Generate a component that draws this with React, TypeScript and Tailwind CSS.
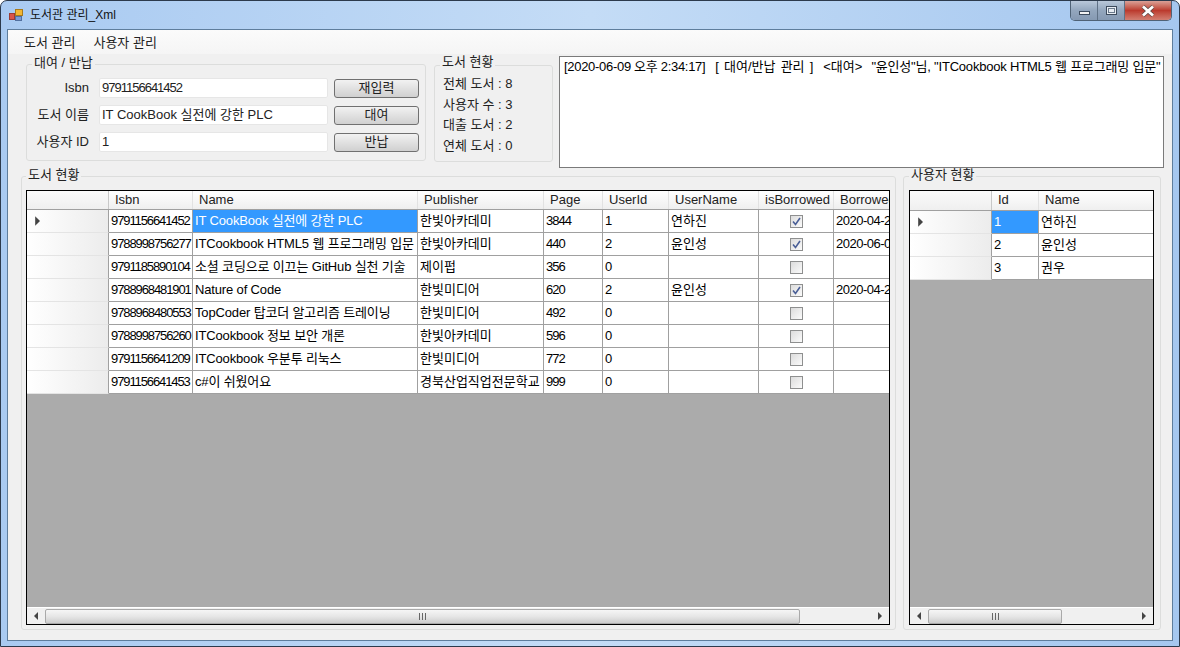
const font = "font-['Liberation_Sans','Noto_Sans_CJK_KR',sans-serif]";

const bookCols = [
  { title: "Isbn", w: 84, cell: "tracking-[-1.1px]" },
  { title: "Name", w: 225, cell: "tracking-[-0.15px]" },
  { title: "Publisher", w: 126 },
  { title: "Page", w: 59, cell: "tracking-[-1px]" },
  { title: "UserId", w: 66 },
  { title: "UserName", w: 90 },
  { title: "isBorrowed", w: 75, cell: "justify-center pl-0 pr-[2px]" },
  { title: "BorrowedDate", w: 120, cell: "tracking-[-0.5px]" },
];

const books = [
  ["9791156641452", "IT CookBook 실전에 강한 PLC", "한빛아카데미", "3844", "1", "연하진", true, "2020-04-21"],
  ["9788998756277", "ITCookbook HTML5 웹 프로그래밍 입문", "한빛아카데미", "440", "2", "윤인성", true, "2020-06-09"],
  ["9791185890104", "소셜 코딩으로 이끄는 GitHub 실천 기술", "제이펍", "356", "0", "", false, ""],
  ["9788968481901", "Nature of Code", "한빛미디어", "620", "2", "윤인성", true, "2020-04-21"],
  ["9788968480553", "TopCoder 탑코더 알고리즘 트레이닝", "한빛미디어", "492", "0", "", false, ""],
  ["9788998756260", "ITCookbook 정보 보안 개론", "한빛아카데미", "596", "0", "", false, ""],
  ["9791156641209", "ITCookbook 우분투 리눅스", "한빛미디어", "772", "0", "", false, ""],
  ["9791156641453", "c#이 쉬웠어요", "경북산업직업전문학교", "999", "0", "", false, ""],
];

const userCols = [
  { title: "Id", w: 47 },
  { title: "Name", w: 115 },
];

const users = [
  ["1", "연하진"],
  ["2", "윤인성"],
  ["3", "권우"],
];

type Col = { title: string; w: number; cell?: string };

function Arrow({ dir, big }: { dir: "left" | "right"; big?: boolean }) {
  return (
    <svg width={big ? 6 : 5} height={big ? 10 : 8} viewBox="0 0 5 8" className="shrink-0">
      <path d={dir === "left" ? "M4 0v8L0 4z" : "M1 0v8l4-4z"} fill="#444" />
    </svg>
  );
}

function Check({ on }: { on: boolean }) {
  return (
    <div className="flex h-[13px] w-[13px] items-center justify-center border border-[#8e8f8f] bg-gradient-to-br from-[#dcdcdc] to-[#fbfbfb]">
      {on && (
        <svg width="9" height="9" viewBox="0 0 9 9">
          <path d="M1 4.5 3.5 7.5 8 1" fill="none" stroke="#4a5f97" strokeWidth="1.6" />
        </svg>
      )}
    </div>
  );
}

function GridView({
  cols,
  rows,
  headH,
  thumbW,
  height,
  width,
}: {
  cols: Col[];
  rows: (string | boolean)[][];
  headH: number;
  thumbW: number;
  height: number;
  width: number;
}) {
  return (
    <div className="flex flex-col border border-black bg-[#ababab]" style={{ height, width }}>
      <div className="min-h-0 flex-1 overflow-hidden">
        <div className="flex border-b border-[#a0a0a0] bg-gradient-to-b from-white to-[#efefef]" style={{ height: headH }}>
          <div className="w-[82px] shrink-0 border-r border-[#c8c8c8] bg-gradient-to-b from-[#fafafa] to-[#efefef]" />
          {cols.map((c) => (
            <div
              key={c.title}
              className="shrink-0 overflow-hidden whitespace-nowrap border-r border-[#e2e2e2] pl-[6px] leading-[17px] text-[#222]"
              style={{ width: c.w }}
            >
              {c.title}
            </div>
          ))}
        </div>
        {rows.map((row, i) => (
          <div key={i} className="flex h-[23px]">
            <div className="flex w-[82px] shrink-0 items-center border-r border-b border-r-[#a0a0a0] border-b-[#e4e4e4] bg-gradient-to-r from-white to-[#ececec] pl-[7px]">
              {i === 0 && <Arrow dir="right" big />}
            </div>
            {cols.map((c, j) => {
              const v = row[j];
              const selected = i === 0 && j === (cols.length === 2 ? 0 : 1);
              return (
                <div
                  key={c.title}
                  className={`flex shrink-0 items-center overflow-hidden whitespace-nowrap border-r border-b border-[#a0a0a0] pl-[2px] ${
                    selected ? "bg-[#3399ff] text-white" : "bg-white text-black"
                  } ${c.cell ?? ""}`}
                  style={{ width: c.w }}
                >
                  {typeof v === "boolean" ? <Check on={v} /> : v}
                </div>
              );
            })}
          </div>
        ))}
      </div>
      <div className="flex h-[17px] shrink-0 items-center border-t border-white bg-[#f0f0f0]">
        <div className="flex h-full w-[18px] shrink-0 items-center pl-[7px]">
          <Arrow dir="left" />
        </div>
        <div
          className="flex h-[15px] shrink-0 items-center justify-center rounded-[2px] border border-[#a9a9a9] bg-gradient-to-b from-[#f6f6f6] via-[#e6e6e6] to-[#cdcdcd]"
          style={{ width: thumbW }}
        >
          <svg width="7" height="7" viewBox="0 0 7 7">
            <path d="M0.5 0v7M3.5 0v7M6.5 0v7" stroke="#666" />
          </svg>
        </div>
        <div className="flex flex-1 justify-end pr-[7px]">
          <Arrow dir="right" />
        </div>
      </div>
    </div>
  );
}

function GroupBox({
  title,
  className,
  legend,
  children,
}: {
  title: string;
  className: string;
  legend: string;
  children?: React.ReactNode;
}) {
  return (
    <div className={`shrink-0 rounded-[3px] border border-[#dcdddc] ${className}`}>
      <div className={`${legend} h-[14px] w-fit bg-[#f0f0f0] px-[2px] leading-[14px] text-[#222]`}>{title}</div>
      {children}
    </div>
  );
}

export default function App() {
  return (
    <div className={`${font} flex h-[647px] w-[1180px] flex-col overflow-hidden rounded-t-[7px] border border-[#2c3a4c] bg-gradient-to-r from-[#a9caf1] via-[#c4dcf6] to-[#a5c7ef] text-[13px] text-[#222]`}>
      {/* title bar */}
      <div className="flex h-[28px] shrink-0 items-start">
        <div className="flex h-[28px] flex-1 items-center pl-[8px]">
          <svg width="14" height="14" viewBox="0 0 14 14">
            <rect x="0.5" y="5.5" width="5" height="6" fill="#d9534a" stroke="#9c3a33" />
            <rect x="6.5" y="1.5" width="7" height="6" fill="#f2b632" stroke="#a87a1a" />
            <rect x="6.5" y="8.5" width="6" height="4" fill="#7a9ad6" stroke="#52709f" />
          </svg>
          <span className="ml-[7px] text-[12px] text-[#111]">도서관 관리_Xml</span>
        </div>
        {/* caption buttons */}
        <div className="mr-[7px] flex h-[20px] overflow-hidden rounded-b-[5px] border border-t-0 border-[#4f6276]">
          <div className="flex w-[27px] items-center justify-center border-r border-[#5f7186] bg-gradient-to-b from-[#b9c8da] via-[#93a6bd] to-[#8599b2]">
            <div className="mt-[5px] h-[4px] w-[11px] border border-[#3c4a5c] bg-[#f2f2f2]" />
          </div>
          <div className="flex w-[27px] items-center justify-center border-r border-[#5f7186] bg-gradient-to-b from-[#b9c8da] via-[#93a6bd] to-[#8599b2]">
            <div className="flex h-[9px] w-[11px] items-center justify-center border border-[#3c4a5c] bg-[#e8edf3]">
              <div className="h-[5px] w-[7px] border border-[#6b7a8c]" />
            </div>
          </div>
          <div className="flex w-[46px] items-center justify-center bg-gradient-to-b from-[#d9a097] via-[#bb3a2e] to-[#d27e72]">
            <svg width="16" height="12" viewBox="0 0 16 12">
              <path d="M3 1.5 13 10.5M13 1.5 3 10.5" stroke="#5a4a48" strokeWidth="4.2" />
              <path d="M3 1.5 13 10.5M13 1.5 3 10.5" stroke="#fff" strokeWidth="2.8" />
            </svg>
          </div>
        </div>
      </div>

      {/* client area */}
      <div className="mx-[6px] h-[612px] shrink-0 border border-[#5e7d9c] bg-[#f0f0f0]">
        {/* menu */}
        <div className="flex h-[24px] items-center gap-[16px] bg-gradient-to-b from-[#fbfbfb] to-[#f5f5f5] pl-[15px] pt-[1px] text-[#222]">
          <span className="px-[1px]">도서 관리</span>
          <span className="px-[1px]">사용자 관리</span>
        </div>

        {/* top row */}
        <div className="flex h-[113px] items-start pl-[18px]">
          <GroupBox title="대여 / 반납" legend="ml-[5px] -mt-[10px]" className="mt-[10px] h-[97px] w-[400px] pt-[1px]">
            <div className="mt-[8px] flex flex-col gap-[7px]">
              {[
                ["Isbn", "9791156641452", "재입력"],
                ["도서 이름", "IT CookBook 실전에 강한 PLC", "대여"],
                ["사용자 ID", "1", "반납"],
              ].map(([label, value, btn], i) => (
                <div key={label} className="flex h-[20px] items-center">
                  <div className="w-[62px] shrink-0 pb-[1px] text-right text-[#222]">{label}</div>
                  <div className={`ml-[10px] flex h-[20px] w-[229px] shrink-0 items-center rounded-[2px] border border-[#e6e6e6] bg-white pb-[1px] pl-[2px] ${i === 0 ? "tracking-[-1px]" : ""}`}>
                    {value}
                  </div>
                  <div className="ml-[6px] flex h-[19px] w-[85px] shrink-0 items-center justify-center rounded-[3px] border border-[#707070] bg-gradient-to-b from-[#f2f2f2] to-[#d0d0d0]">
                    {btn}
                  </div>
                </div>
              ))}
            </div>
          </GroupBox>
          <GroupBox title="도서 현황" legend="ml-[5px] -mt-[11px]" className="ml-[8px] mt-[11px] h-[97px] w-[119px]">
            <div className="mt-[5px] flex flex-col pl-[8px] leading-[20.7px] text-[#222]">
              <span>전체 도서 : 8</span>
              <span>사용자 수 : 3</span>
              <span>대출 도서 : 2</span>
              <span>연체 도서 : 0</span>
            </div>
          </GroupBox>
          <div className="ml-[6px] mt-[2px] h-[112px] w-[605px] overflow-hidden whitespace-nowrap border border-[#7a7a7a] bg-white pl-[4px] text-black">
            <span className="tracking-[-0.3px]">[2020-06-09 오후 2:34:17]</span>
            <span className="ml-[10px] [word-spacing:1.5px]">[ 대여/반납 관리 ]</span>
            <span className="ml-[10px]">&lt;대여&gt;</span>
            <span className="ml-[9px] tracking-[-0.2px]">"윤인성"님, "ITCookbook HTML5 웹 프로그래밍 입문"</span>
          </div>
        </div>

        {/* bottom row */}
        <div className="mt-[9px] flex items-start pl-[13px]">
          <GroupBox title="도서 현황" legend="ml-0 -mt-[9px]" className="h-[454px] w-[875px] pl-[4px]">
            <div className="mt-[8px]">
              <GridView cols={bookCols} rows={books} headH={19} thumbW={755} height={435} width={864} />
            </div>
          </GroupBox>
          <GroupBox title="사용자 현황" legend="ml-0 -mt-[9px]" className="ml-[7px] h-[454px] w-[258px] pl-[5px]">
            <div className="mt-[8px]">
              <GridView cols={userCols} rows={users} headH={20} thumbW={134} height={435} width={245} />
            </div>
          </GroupBox>
        </div>
      </div>
    </div>
  );
}
